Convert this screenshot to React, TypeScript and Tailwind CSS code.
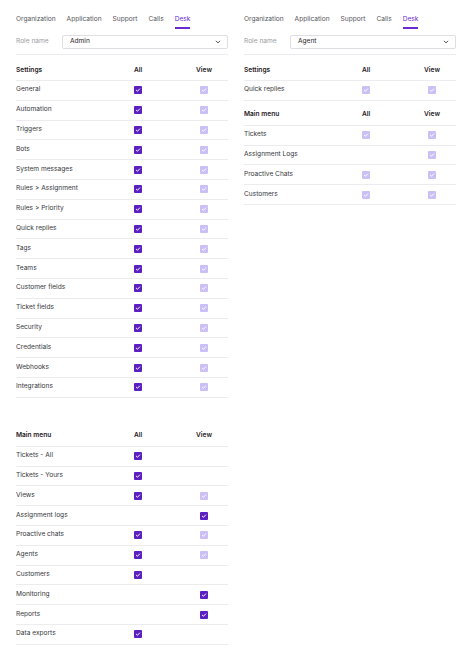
type Mark = 'on' | 'dim' | null

interface Row {
  label: string
  all: Mark
  view: Mark
}

const adminSettings: Row[] = [
  'General',
  'Automation',
  'Triggers',
  'Bots',
  'System messages',
  'Rules > Assignment',
  'Rules > Priority',
  'Quick replies',
  'Tags',
  'Teams',
  'Customer fields',
  'Ticket fields',
  'Security',
  'Credentials',
  'Webhooks',
  'Integrations',
].map(label => ({ label, all: 'on', view: 'dim' }))

const adminMenu: Row[] = [
  { label: 'Tickets - All', all: 'on', view: null },
  { label: 'Tickets - Yours', all: 'on', view: null },
  { label: 'Views', all: 'on', view: 'dim' },
  { label: 'Assignment logs', all: null, view: 'on' },
  { label: 'Proactive chats', all: 'on', view: 'dim' },
  { label: 'Agents', all: 'on', view: 'dim' },
  { label: 'Customers', all: 'on', view: null },
  { label: 'Monitoring', all: null, view: 'on' },
  { label: 'Reports', all: null, view: 'on' },
  { label: 'Data exports', all: 'on', view: null },
]

const agentSettings: Row[] = [{ label: 'Quick replies', all: 'dim', view: 'dim' }]

const agentMenu: Row[] = [
  { label: 'Tickets', all: 'dim', view: 'dim' },
  { label: 'Assignment Logs', all: null, view: 'dim' },
  { label: 'Proactive Chats', all: 'dim', view: 'dim' },
  { label: 'Customers', all: 'dim', view: 'dim' },
]

const tabs = ['Organization', 'Application', 'Support', 'Calls', 'Desk']

function Check({ mark }: { mark: Mark }) {
  if (!mark) return null
  return (
    <span
      className={`flex h-[8px] w-[8px] items-center justify-center rounded-[1px] ${
        mark === 'on' ? 'bg-[#5b1fc2]' : 'bg-[#cbbff6]'
      }`}
    >
      <svg viewBox="0 0 10 10" className="h-[6px] w-[6px]">
        <polyline points="2.2,5.3 4.2,7.1 7.8,3.2" fill="none" stroke="white" strokeWidth="1.6" strokeLinecap="round" strokeLinejoin="round" />
      </svg>
    </span>
  )
}

function Table({ title, rows, className = '' }: { title: string; rows: Row[]; className?: string }) {
  return (
    <div className={className}>
      <div className="grid h-[20px] grid-cols-[1fr_48px_48px] items-center gap-x-[18px] border-b border-[#ececef] font-semibold text-[#1f2023]">
        <span>{title}</span>
        <span className="text-center">All</span>
        <span className="text-center">View</span>
      </div>
      {rows.map(row => (
        <div
          key={row.label}
          className="grid h-[19.8px] grid-cols-[1fr_48px_48px] items-center gap-x-[18px] border-b border-[#ececef] text-[#35363b]"
        >
          <span className="whitespace-nowrap">{row.label}</span>
          <span className="flex justify-center">
            <Check mark={row.all} />
          </span>
          <span className="flex justify-center">
            <Check mark={row.view} />
          </span>
        </div>
      ))}
    </div>
  )
}

function RolePanel({ role, children }: { role: string; children: React.ReactNode }) {
  return (
    <div className="flex w-[212px] flex-col">
      <div className="flex gap-x-[11px] pt-[14px]">
        {tabs.map(tab => (
          <span
            key={tab}
            className={`border-b-2 pb-[3px] leading-[10px] ${
              tab === 'Desk' ? 'border-[#6a2bd4] text-[#6a2bd4]' : 'border-transparent text-[#55565c]'
            }`}
          >
            {tab}
          </span>
        ))}
      </div>
      <div className="flex items-center border-b border-[#ececef] pb-[5px] pt-[6px]">
        <span className="w-[46px] text-[#9a9ba1]">Role name</span>
        <div className="flex h-[14px] flex-1 items-center justify-between rounded-[2px] border border-[#dedee3] pl-[7px] pr-[6px] text-[#1f2023]">
          <span>{role}</span>
          <svg viewBox="0 0 10 10" className="h-[6px] w-[6px]">
            <polyline points="2,3.5 5,6.5 8,3.5" fill="none" stroke="#2a2b30" strokeWidth="1.4" strokeLinecap="round" strokeLinejoin="round" />
          </svg>
        </div>
      </div>
      {children}
    </div>
  )
}

export default function App() {
  return (
    <div className="flex h-[655px] w-[474px] gap-x-[16px] bg-white pl-[16px] font-['Inter',sans-serif] text-[6.6px]">
      <RolePanel role="Admin">
        <Table title="Settings" rows={adminSettings} className="mt-[6px]" />
        <Table title="Main menu" rows={adminMenu} className="mt-[29px]" />
      </RolePanel>
      <RolePanel role="Agent">
        <Table title="Settings" rows={agentSettings} className="mt-[6px]" />
        <Table title="Main menu" rows={agentMenu} className="mt-[5px]" />
      </RolePanel>
    </div>
  )
}
